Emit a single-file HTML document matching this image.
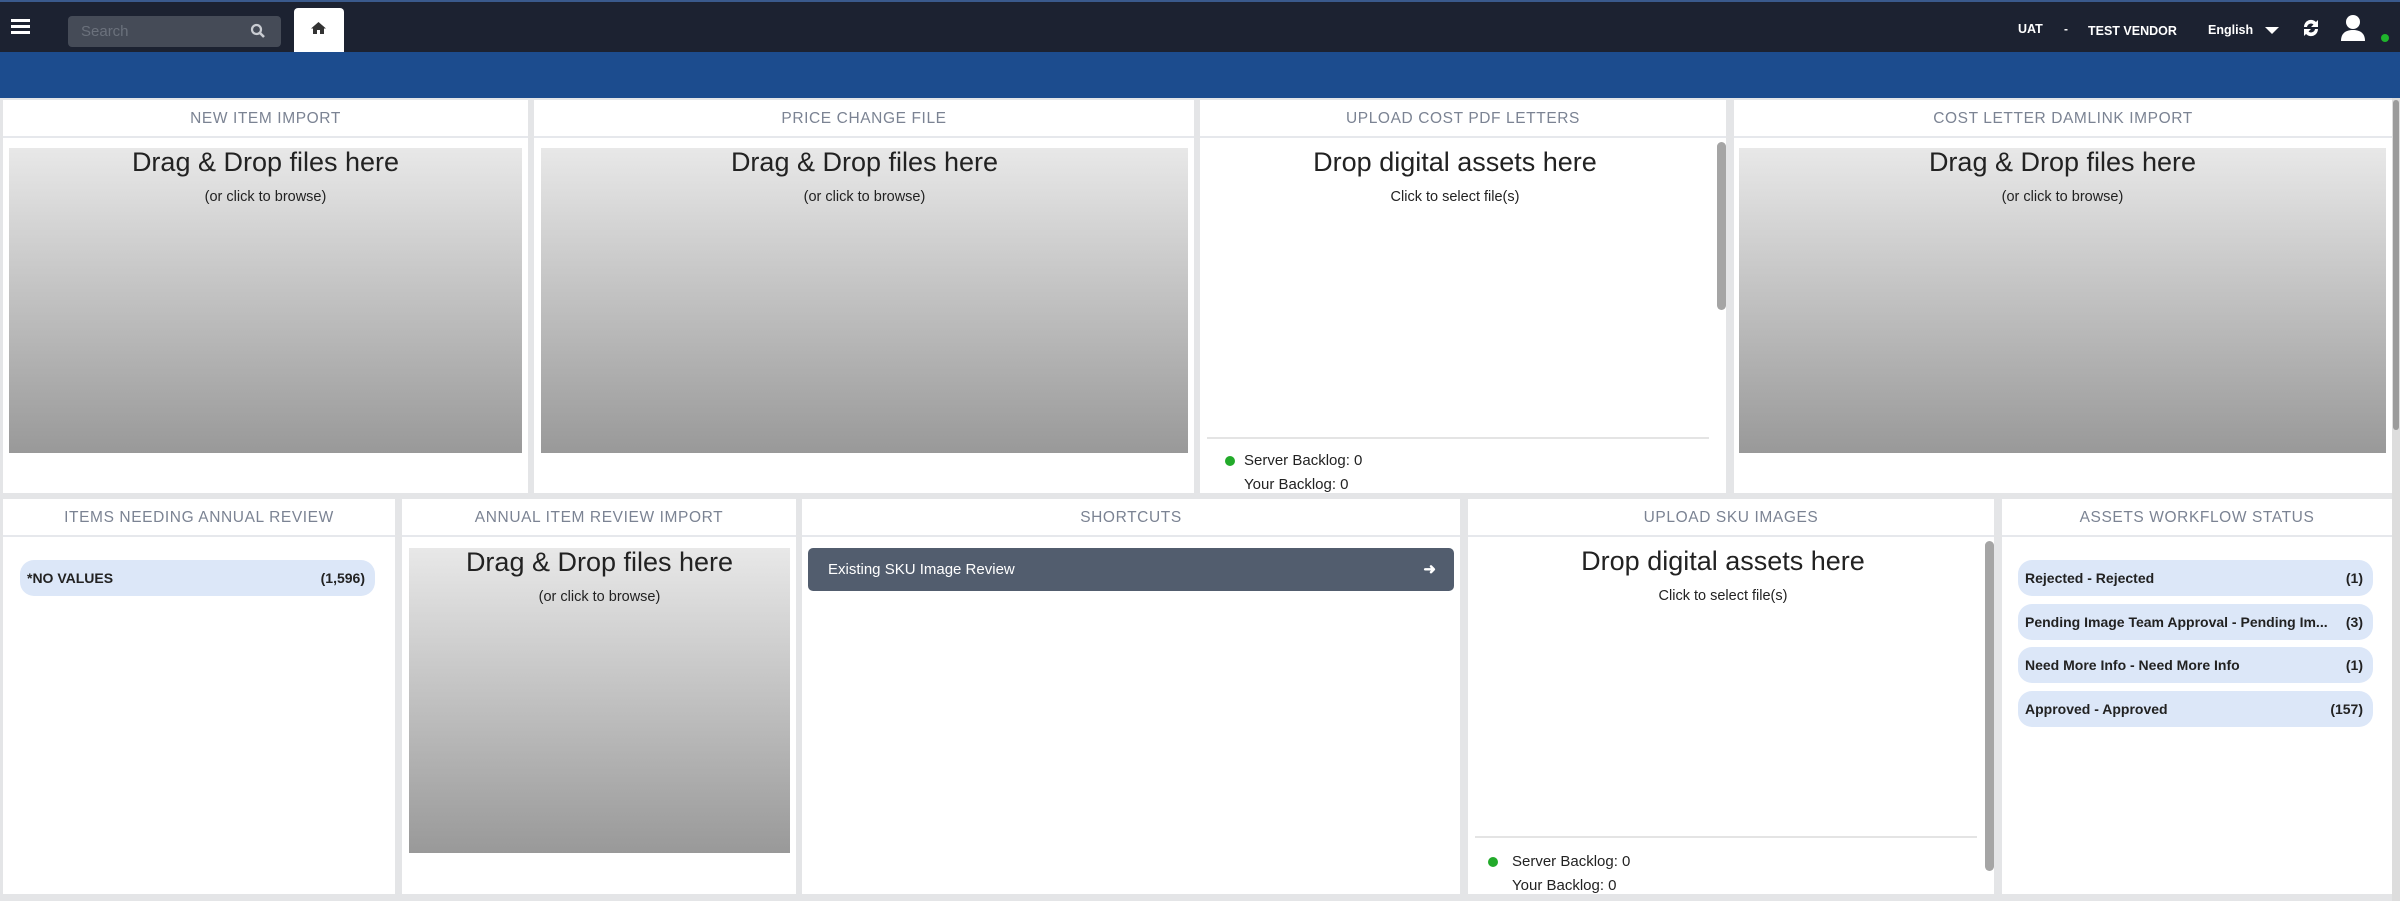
<!DOCTYPE html>
<html><head><meta charset="utf-8"><style>
*{box-sizing:border-box;margin:0;padding:0}
body{width:2400px;height:901px;overflow:hidden;background:#e4e5e7;font-family:"Liberation Sans",sans-serif;position:relative}
.abs{position:absolute}
.top{left:0;top:0;width:2400px;height:52px;background:#1c2231;border-top:2px solid #3a5a8c}
.band{left:0;top:52px;width:2400px;height:46px;background:#1c4c8e}
.panel{position:absolute;background:#fff}
.hd{position:absolute;left:0;right:0;top:0;height:38px;border-bottom:2px solid #e6e8ec;text-align:center;color:#7b8393;font-size:15.5px;letter-spacing:.6px;line-height:38px}
.dz{position:absolute;background:linear-gradient(#e8e8e8,#999);text-align:center;color:#222}
.dz .t{font-size:27px;margin-top:-4px;line-height:36px}
.dz .s{font-size:14.5px;margin-top:9px}
.pill{position:absolute;background:#dce7f8;border-radius:14px;font-size:14px;font-weight:bold;color:#222;line-height:36px;padding:0 10px 0 7px;display:flex;justify-content:space-between}
.bk{font-size:15px;color:#222;position:absolute}
.sb{position:absolute;width:9px;border-radius:5px;background:#a5a5a5}
</style></head><body>
<div class="abs top"></div>
<div class="abs band"></div>
<div class="abs" style="left:11px;top:19px;width:19px;height:3px;background:#fff;box-shadow:0 6px 0 #fff,0 12px 0 #fff"></div>
<div class="abs" style="left:68px;top:16px;width:213px;height:31px;background:#454b57;border-radius:4px;color:#6b717c;font-size:15px;line-height:31px;padding-left:13px">Search</div>
<svg class="abs" style="left:250px;top:23px" width="16" height="16" viewBox="0 0 16 16"><circle cx="6.5" cy="6.5" r="4.5" stroke="#c9ccd2" stroke-width="2.2" fill="none"/><path d="M10 10l4 4" stroke="#c9ccd2" stroke-width="2.6"/></svg>
<div class="abs" style="left:294px;top:8px;width:50px;height:44px;background:#fff;border-radius:4px 4px 0 0"></div>
<svg class="abs" style="left:311px;top:22px" width="15" height="12" viewBox="0 0 15 12"><path d="M7.5 0L0 6.5h2V12h4V8h3v4h4V6.5h2z" fill="#333"/></svg>
<div class="abs" style="left:2018px;top:22px;color:#fff;font-size:12.5px;font-weight:bold">UAT</div>
<div class="abs" style="left:2064px;top:22px;color:#fff;font-size:12px;font-weight:bold">-</div>
<div class="abs" style="left:2088px;top:24px;color:#fff;font-size:12.5px;font-weight:bold">TEST VENDOR</div>
<div class="abs" style="left:2208px;top:23px;color:#fff;font-size:12.5px;font-weight:bold">English</div>
<div class="abs" style="left:2265px;top:27px;width:0;height:0;border-left:7px solid transparent;border-right:7px solid transparent;border-top:7px solid #fff"></div>
<svg class="abs" style="left:2301px;top:17px" width="20" height="22" viewBox="0 0 20 22"><path d="M3 10a7 7 0 0 1 12-5l2-2v7h-7l2.5-2.5A4 4 0 0 0 6 10z" fill="#fff"/><path d="M17 12a7 7 0 0 1-12 5l-2 2v-7h7l-2.5 2.5A4 4 0 0 0 14 12z" fill="#fff"/></svg>
<svg class="abs" style="left:2340px;top:14px" width="26" height="28" viewBox="0 0 26 28"><circle cx="13" cy="8" r="7" fill="#fff"/><path d="M1 27c0-8 5-11 12-11s12 3 12 11z" fill="#fff"/></svg>
<div class="abs" style="left:2381px;top:34px;width:8px;height:8px;border-radius:50%;background:#1fb42c"></div>
<div class="abs" style="left:2392px;top:98px;width:8px;height:803px;background:#ddd"></div>
<div class="abs" style="left:2393px;top:100px;width:6px;height:330px;background:#9b9b9b;border-radius:3px"></div>

<div class="panel" style="left:3px;top:100px;width:525px;height:393px"><div class="hd">NEW ITEM IMPORT</div>
<div class="dz" style="left:6px;top:48px;width:513px;height:305px"><div class="t">Drag &amp; Drop files here</div><div class="s">(or click to browse)</div></div></div>
<div class="panel" style="left:534px;top:100px;width:660px;height:393px"><div class="hd">PRICE CHANGE FILE</div>
<div class="dz" style="left:7px;top:48px;width:647px;height:305px"><div class="t">Drag &amp; Drop files here</div><div class="s">(or click to browse)</div></div></div>
<div class="panel" style="left:1200px;top:100px;width:526px;height:393px"><div class="hd">UPLOAD COST PDF LETTERS</div>
<div class="abs" style="left:0;width:510px;top:44px;text-align:center;color:#222"><div style="font-size:27px;line-height:36px">Drop digital assets here</div><div style="font-size:14.5px;margin-top:9px">Click to select file(s)</div></div>
<div class="abs" style="left:7px;top:337px;width:502px;height:2px;background:#e4e4e4"></div>
<div class="abs" style="left:25px;top:356px;width:10px;height:10px;border-radius:50%;background:#22aa2a"></div>
<div class="bk" style="left:44px;top:352px">Server Backlog: 0</div>
<div class="bk" style="left:44px;top:376px">Your Backlog: 0</div>
<div class="sb" style="left:517px;top:42px;height:168px"></div></div>
<div class="panel" style="left:1734px;top:100px;width:658px;height:393px"><div class="hd">COST LETTER DAMLINK IMPORT</div>
<div class="dz" style="left:5px;top:48px;width:647px;height:305px"><div class="t">Drag &amp; Drop files here</div><div class="s">(or click to browse)</div></div></div>

<div class="panel" style="left:3px;top:499px;width:392px;height:395px"><div class="hd">ITEMS NEEDING ANNUAL REVIEW</div>
<div class="pill" style="left:17px;top:61px;width:355px"><span>*NO VALUES</span><span>(1,596)</span></div></div>
<div class="panel" style="left:402px;top:499px;width:394px;height:395px"><div class="hd">ANNUAL ITEM REVIEW IMPORT</div>
<div class="dz" style="left:7px;top:49px;width:381px;height:305px"><div class="t">Drag &amp; Drop files here</div><div class="s">(or click to browse)</div></div></div>
<div class="panel" style="left:802px;top:499px;width:658px;height:395px"><div class="hd">SHORTCUTS</div>
<div class="abs" style="left:6px;top:49px;width:646px;height:43px;background:#525d6e;border-radius:5px;color:#fff;font-size:15px;line-height:43px;padding-left:20px">Existing SKU Image Review<span style="position:absolute;right:18px;font-weight:bold">&#10140;</span></div></div>
<div class="panel" style="left:1468px;top:499px;width:526px;height:395px"><div class="hd">UPLOAD SKU IMAGES</div>
<div class="abs" style="left:0;width:510px;top:44px;text-align:center;color:#222"><div style="font-size:27px;line-height:36px">Drop digital assets here</div><div style="font-size:14.5px;margin-top:9px">Click to select file(s)</div></div>
<div class="abs" style="left:7px;top:337px;width:502px;height:2px;background:#e4e4e4"></div>
<div class="abs" style="left:20px;top:358px;width:10px;height:10px;border-radius:50%;background:#22aa2a"></div>
<div class="bk" style="left:44px;top:354px">Server Backlog: 0</div>
<div class="bk" style="left:44px;top:378px">Your Backlog: 0</div>
<div class="sb" style="left:517px;top:42px;height:330px"></div></div>
<div class="panel" style="left:2002px;top:499px;width:390px;height:395px"><div class="hd">ASSETS WORKFLOW STATUS</div>
<div class="pill" style="left:16px;top:61px;width:355px"><span>Rejected - Rejected</span><span>(1)</span></div>
<div class="pill" style="left:16px;top:105px;width:355px"><span>Pending Image Team Approval - Pending Im...</span><span>(3)</span></div>
<div class="pill" style="left:16px;top:148px;width:355px"><span>Need More Info - Need More Info</span><span>(1)</span></div>
<div class="pill" style="left:16px;top:192px;width:355px"><span>Approved - Approved</span><span>(157)</span></div></div>
</body></html>
